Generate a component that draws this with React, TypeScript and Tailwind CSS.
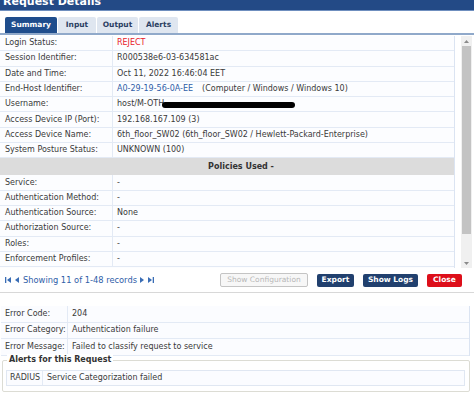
import React from 'react';

const summaryRows: { label: string; value: React.ReactNode }[] = [
  { label: 'Login Status:', value: <span className="text-[#e8202a]">REJECT</span> },
  { label: 'Session Identifier:', value: 'R000538e6-03-634581ac' },
  { label: 'Date and Time:', value: 'Oct 11, 2022 16:46:04 EET' },
  {
    label: 'End-Host Identifier:',
    value: (
      <span>
        <span className="text-[#2f5ea8]">A0-29-19-56-0A-EE</span>
        <span className="ml-[9px]">(Computer / Windows / Windows 10)</span>
      </span>
    ),
  },
  {
    label: 'Username:',
    value: (
      <span className="flex items-center">
        host/M-OTH
        <span className="-ml-[2px] mt-[1px] h-[6px] w-[133px] rounded-full bg-black" />
      </span>
    ),
  },
  { label: 'Access Device IP (Port):', value: '192.168.167.109 (3)' },
  { label: 'Access Device Name:', value: '6th_floor_SW02 (6th_floor_SW02 / Hewlett-Packard-Enterprise)' },
  { label: 'System Posture Status:', value: 'UNKNOWN (100)' },
];

const policyRows = [
  { label: 'Service:', value: '-' },
  { label: 'Authentication Method:', value: '-' },
  { label: 'Authentication Source:', value: 'None' },
  { label: 'Authorization Source:', value: '-' },
  { label: 'Roles:', value: '-' },
  { label: 'Enforcement Profiles:', value: '-' },
];

const errorRows = [
  { label: 'Error Code:', value: '204' },
  { label: 'Error Category:', value: 'Authentication failure' },
  { label: 'Error Message:', value: 'Failed to classify request to service' },
];

function Row({ label, value }: { label: string; value: React.ReactNode }) {
  return (
    <div className="flex h-[15.3px] items-center border-b border-[#e3eaf5]">
      <div className="flex h-full w-[113px] items-center border-r border-[#e3eaf5] pl-[5px]">{label}</div>
      <div className="flex h-full items-center pl-[4px] whitespace-nowrap">{value}</div>
    </div>
  );
}

function PagerIcon({ dir, bar }: { dir: 'l' | 'r'; bar?: boolean }) {
  return (
    <svg width={bar ? 7 : 4} height="6" viewBox={bar ? '0 0 7 6' : '0 0 4 6'} className="fill-[#3a6db5]">
      {dir === 'l' ? (
        bar ? (
          <>
            <rect x="0" y="0" width="1.3" height="6" />
            <path d="M6 0 L2 3 L6 6 Z" />
          </>
        ) : (
          <path d="M4 0 L0 3 L4 6 Z" />
        )
      ) : bar ? (
        <>
          <path d="M1 0 L5 3 L1 6 Z" />
          <rect x="5.7" y="0" width="1.3" height="6" />
        </>
      ) : (
        <path d="M0 0 L4 3 L0 6 Z" />
      )}
    </svg>
  );
}

export default function App() {
  return (
    <div className="relative h-[399px] w-[474px] overflow-hidden bg-white font-['DejaVu_Sans',sans-serif] text-[8px] text-[#3a3a3a]">
      {/* title bar */}
      <div className="flex h-[11px] items-start overflow-hidden border-b border-[#6f8fbf] bg-[#234a86] pl-[3px]">
        <span className="-mt-[5px] text-[11px] font-bold leading-[13px] text-white">Request Details</span>
      </div>

      {/* tabs */}
      <div className="mt-[6px] flex h-[16px] items-end gap-[1px] pl-[5px] text-[7.5px] font-bold">
        <div className="flex h-full w-[52px] items-center justify-center rounded-t-[2px] bg-[#1f4d8c] text-white">Summary</div>
        <div className="flex h-full w-[38px] items-center justify-center rounded-t-[2px] bg-[#dfe6f0] text-[#2b3f63]">Input</div>
        <div className="flex h-full w-[41px] items-center justify-center rounded-t-[2px] bg-[#dfe6f0] text-[#2b3f63]">Output</div>
        <div className="flex h-full w-[39px] items-center justify-center rounded-t-[2px] bg-[#dfe6f0] text-[#2b3f63]">Alerts</div>
      </div>
      <div className="h-[2px] bg-[#90a9ca]" />

      {/* summary table + scrollbar */}
      <div className="flex h-[233px] pt-[1px]">
        <div className="w-[455px] border-r border-[#dbe4f2] bg-[#fcfdff]">
          {summaryRows.map((r) => (
            <Row key={r.label} label={r.label} value={r.value} />
          ))}
          <div className="flex h-[17px] items-center justify-center bg-[#dcdcdc] pl-[28px] font-bold text-[#333]">
            Policies Used -
          </div>
          {policyRows.map((r) => (
            <Row key={r.label} label={r.label} value={r.value} />
          ))}
        </div>
        <div className="ml-[6px] flex w-[11px] flex-col items-center bg-[#f0f0f0]">
          <div className="flex h-[10px] items-center">
            <svg width="5" height="3" viewBox="0 0 5 3" className="fill-[#8a8a8a]">
              <path d="M0 3 L2.5 0 L5 3 Z" />
            </svg>
          </div>
          <div className="h-[188px] w-[9px] bg-[#c3c3c3]" />
          <div className="flex-1" />
          <div className="flex h-[10px] items-center">
            <svg width="5" height="3" viewBox="0 0 5 3" className="fill-[#8a8a8a]">
              <path d="M0 0 L2.5 3 L5 0 Z" />
            </svg>
          </div>
        </div>
      </div>

      {/* pager + buttons */}
      <div className="flex h-[25px] items-center border-b border-[#d8d8d8] pl-[5px] pr-[12px]">
        <div className="flex items-center gap-[3px] text-[#2f5ea8]">
          <PagerIcon dir="l" bar />
          <PagerIcon dir="l" />
          <span className="ml-[1px] text-[8.3px]">Showing 11 of 1-48 records</span>
          <PagerIcon dir="r" />
          <PagerIcon dir="r" bar />
        </div>
        <div className="ml-auto flex items-center gap-[9px] text-[7.5px]">
          <div className="flex h-[14px] w-[88px] items-center justify-center rounded-[2px] border border-[#c4c4c4] bg-[#f7f7f7] text-[#b8b8b8]">
            Show Configuration
          </div>
          <div className="flex h-[13px] w-[37px] items-center justify-center rounded-[2px] bg-[#21406e] font-bold text-white">Export</div>
          <div className="flex h-[13px] w-[55px] items-center justify-center rounded-[2px] bg-[#21406e] font-bold text-white">Show Logs</div>
          <div className="flex h-[13px] w-[35px] items-center justify-center rounded-[2px] bg-[#dd0f1a] font-bold text-white">Close</div>
        </div>
      </div>

      {/* error details */}
      <div className="ml-[1px] mt-[13px] w-[469px] border-r border-[#dbe4f2] bg-[#fbfcff]">
        {errorRows.map((r) => (
          <div key={r.label} className="flex h-[16.5px] items-center border-b border-[#e3eaf5]">
            <div className="flex h-full w-[67px] items-center border-r border-[#e3eaf5] pl-[4px]">{r.label}</div>
            <div className="pl-[4px] whitespace-nowrap">{r.value}</div>
          </div>
        ))}
      </div>

      {/* alerts fieldset */}
      <div className="relative ml-[2px] mt-[4px] h-[32px] w-[468px] rounded-[2px] border border-[#dcdcd4]">
        <span className="absolute -top-[7px] left-[4px] bg-white px-[2px] font-bold text-[#333]">Alerts for this Request</span>
        <div className="ml-[3px] mt-[9px] flex h-[16px] w-[459px] items-center border border-[#e0e7f2] bg-[#fbfcff]">
          <div className="flex h-full w-[36px] items-center border-r border-[#e3eaf5] pl-[3px]">RADIUS</div>
          <div className="pl-[4px]">Service Categorization failed</div>
        </div>
      </div>
    </div>
  );
}
